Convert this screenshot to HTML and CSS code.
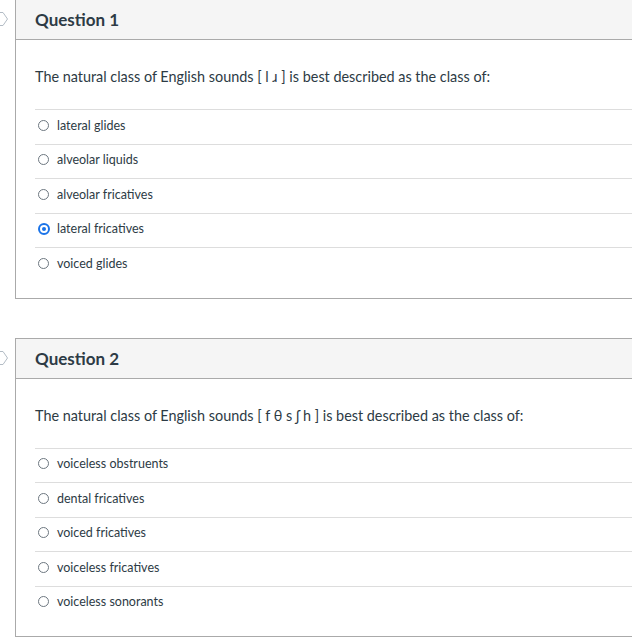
FILE: index.html
```html
<!DOCTYPE html>
<html lang="en">
<head>
<meta charset="UTF-8">
<meta name="viewport" content="width=device-width, initial-scale=1.0">
<link rel="stylesheet" href="styles.css">
</head>
<body>
    <div class="quiz">
        <!-- Question 1 -->
        <div class="question-holder">
            <div class="flag">
                <svg width="15" height="15" viewBox="0 0 15 15"><path d="M-6 0.5 H3 L7.5 7 L3 13.5 H-6" fill="none" stroke="#b3bcc5" stroke-width="1"/></svg>
            </div>
            <div class="question">
                <div class="question-header">Question 1</div>
                <div class="question-text">The natural class of English sounds [ l ɹ ] is best described as the class of:</div>
                <div class="answers">
                    <div class="answer"><span class="radio"></span>lateral glides</div>
                    <div class="answer"><span class="radio"></span>alveolar liquids</div>
                    <div class="answer"><span class="radio"></span>alveolar fricatives</div>
                    <div class="answer"><span class="radio checked"></span>lateral fricatives</div>
                    <div class="answer"><span class="radio"></span>voiced glides</div>
                </div>
            </div>
        </div>

        <!-- Question 2 -->
        <div class="question-holder">
            <div class="flag">
                <svg width="15" height="15" viewBox="0 0 15 15"><path d="M-6 0.5 H3 L7.5 7 L3 13.5 H-6" fill="none" stroke="#b3bcc5" stroke-width="1"/></svg>
            </div>
            <div class="question">
                <div class="question-header">Question 2</div>
                <div class="question-text">The natural class of English sounds [ f θ s ʃ h ] is best described as the class of:</div>
                <div class="answers">
                    <div class="answer"><span class="radio"></span>voiceless obstruents</div>
                    <div class="answer"><span class="radio"></span>dental fricatives</div>
                    <div class="answer"><span class="radio"></span>voiced fricatives</div>
                    <div class="answer"><span class="radio"></span>voiceless fricatives</div>
                    <div class="answer"><span class="radio"></span>voiceless sonorants</div>
                </div>
            </div>
        </div>
    </div>
</body>
</html>
```

FILE: styles.css
```css
body, html {
    margin: 0;
    padding: 0;
    font-family: Lato, "Open Sans", sans-serif;
    color: #2d3b45;
    background-color: #fff;
    overflow: hidden;
}

.quiz {
    margin-top: -1px;
    width: 700px;
}

.question-holder {
    display: flex;
    margin-bottom: 39px;
}

/* small flag marker left of each question */
.flag {
    width: 15px;
    flex-shrink: 0;
    padding-top: 13px;
}

.flag svg {
    display: block;
}

.question {
    flex: 1;
    border: 1px solid #aaaaaa;
    border-right: none;
}

.question-header {
    height: 39px;
    line-height: 39px;
    padding-left: 19px;
    background-color: #f5f5f5;
    border-bottom: 1px solid #aaaaaa;
    font-size: 17px;
    font-weight: bold;
}

.question-text {
    padding: 27px 0 22px 19px;
    font-size: 14.4px;
    line-height: 20px;
}

.answers {
    margin-left: 19px;
    padding-bottom: 16px;
}

.answer {
    display: flex;
    align-items: center;
    border-top: 1px solid #dddddd;
    height: 34.5px;
    padding-bottom: 3px;
    box-sizing: border-box;
    font-size: 12.5px;
}

/* radio buttons */
.radio {
    width: 11px;
    height: 11px;
    border: 1px solid #6d7780;
    border-radius: 50%;
    box-sizing: border-box;
    margin-left: 3px;
    margin-right: 8px;
    flex-shrink: 0;
}

.radio.checked {
    width: 12px;
    height: 12px;
    margin-left: 2.5px;
    margin-right: 7.5px;
    border: 2px solid #1a73e8;
    position: relative;
}

.radio.checked::after {
    content: "";
    position: absolute;
    left: 2px;
    top: 2px;
    width: 4px;
    height: 4px;
    border-radius: 50%;
    background-color: #1a73e8;
}
```
